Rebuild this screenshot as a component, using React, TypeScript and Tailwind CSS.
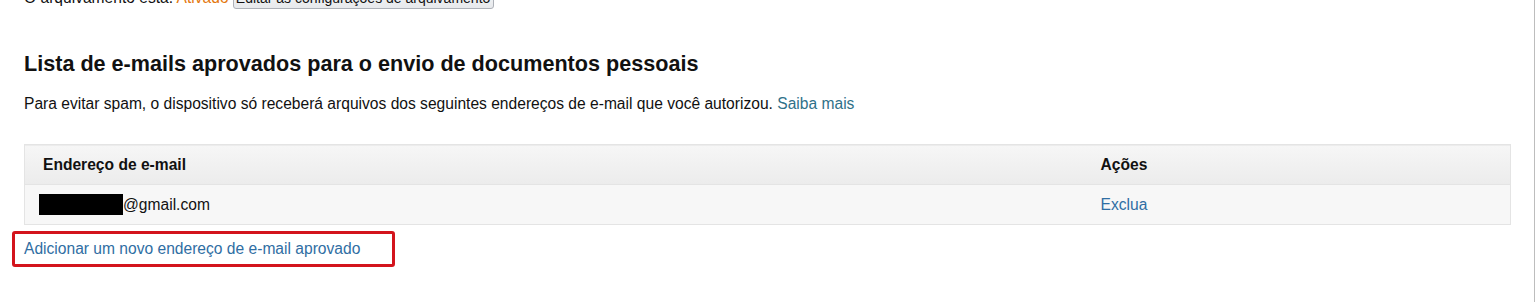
const rows = [{ user: "", domain: "@gmail.com" }];

export default function App() {
  return (
    <div className="relative h-[302px] w-[1536px] overflow-hidden bg-white font-['Liberation_Sans',Arial,sans-serif] text-[15.6px] text-[#111]">
      {/* right scroll edge */}
      <div className="absolute right-[1px] top-0 h-full w-[1px] bg-[#bdbdbd]" />

      <div className="w-[1511px] pl-6">
        {/* archive status row, cut off at the top */}
        <div className="-mt-[13px] flex h-[22px] items-center gap-[4px]">
          <span className="leading-[22px]">
            O arquivamento está: <span className="text-[#e47911]">Ativado</span>
          </span>
          <button className="h-[22px] w-[261px] rounded-[3px] border border-[#adb1b8] bg-gradient-to-b from-[#f7f8fa] to-[#e7e9ec] text-[14px] leading-[20px] text-[#111]">
            Editar as configurações de arquivamento
          </button>
        </div>

        <h2 className="mt-[42px] text-[21.6px] font-bold leading-[26px]">
          Lista de e-mails aprovados para o envio de documentos pessoais
        </h2>

        <p className="mt-[17px] leading-[20px]">
          Para evitar spam, o dispositivo só receberá arquivos dos seguintes endereços de e-mail que você autorizou.{" "}
          <a className="text-[#2f7189]">Saiba mais</a>
        </p>

        <table className="mt-[30px] w-full border-collapse">
          <thead>
            <tr className="h-[40px] border border-[#e4e4e4] bg-gradient-to-b from-[#f6f6f6] to-[#ececec] text-left">
              <th className="pl-[18px] font-bold">Endereço de e-mail</th>
              <th className="w-[410px] font-bold">Ações</th>
            </tr>
          </thead>
          <tbody>
            {rows.map((r, i) => (
              <tr key={i} className="h-[40px] border border-[#e4e4e4] bg-[#f7f7f7]">
                <td className="pl-[14px]">
                  <div className="flex items-center">
                    <span className="h-[21px] w-[84px] bg-black" />
                    <span className="leading-[21px]">{r.domain}</span>
                  </div>
                </td>
                <td>
                  <a className="text-[#2f6ea3]">Exclua</a>
                </td>
              </tr>
            ))}
          </tbody>
        </table>

        <div className="-ml-[12px] mt-[6px] inline-block h-[36px] rounded-[3px] border-[3px] border-[#d3141c] pl-[9px] pr-[32px] leading-[30px]">
          <a className="text-[#2f6ea3]">Adicionar um novo endereço de e-mail aprovado</a>
        </div>
      </div>
    </div>
  );
}
